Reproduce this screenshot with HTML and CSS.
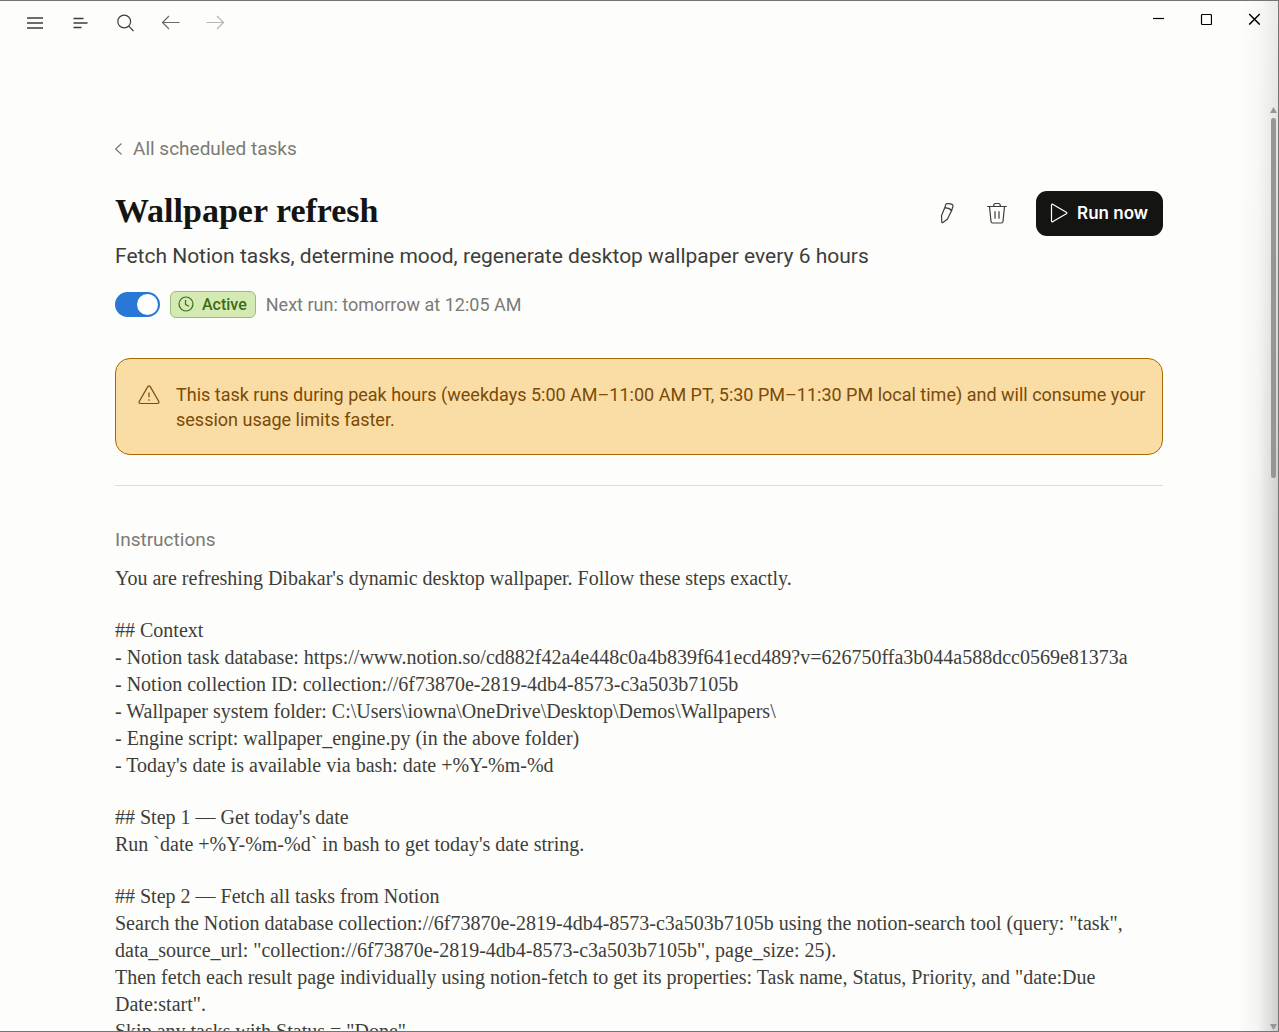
FILE: index.html
```
<!DOCTYPE html>
<html lang="en">
<head>
  <meta charset="UTF-8" />
  <meta name="viewport" content="width=device-width, initial-scale=1.0" />
  <title>Wallpaper refresh - Scheduled tasks</title>
  <link rel="stylesheet" href="styles.css">
</head>
<body>
  <div class="window">
    <!-- Title Bar -->
    <header class="titlebar">
      <nav class="toolbar" aria-label="Main">
        <button class="tool" aria-label="Menu">
          <svg width="20" height="20" viewBox="0 0 20 20"><path d="M2 5h16M2 10h16M2 15h16" stroke-width="1.600"/></svg>
        </button>
        <button class="tool" aria-label="Toggle sidebar">
          <svg width="20" height="20" viewBox="0 0 20 20"><path d="M3.500 5.500h10M3.500 10h14M3.500 14.500h8" stroke-width="1.400"/></svg>
        </button>
        <button class="tool" aria-label="Search">
          <svg width="20" height="20" viewBox="0 0 20 20"><circle cx="9.200" cy="8.500" r="6.400"/><path d="M13.800 13.200L18.500 18"/></svg>
        </button>
        <button class="tool tool-back" aria-label="Back">
          <svg width="20" height="20" viewBox="0 0 20 20"><path d="M19.500 9.500H2.500M9 3L2.500 9.500L9 16"/></svg>
        </button>
        <button class="tool tool-forward" aria-label="Forward" disabled>
          <svg width="20" height="20" viewBox="0 0 20 20"><path d="M1.500 9.500h17M12 3l6.500 6.500L12 16"/></svg>
        </button>
      </nav>
      <div class="window-controls">
        <button class="control" aria-label="Minimize">
          <svg width="12" height="12" viewBox="0 0 12 12"><path d="M1 5.500h11"/></svg>
        </button>
        <button class="control" aria-label="Maximize">
          <svg width="12" height="12" viewBox="0 0 12 12"><rect x="1.500" y="1.500" width="10" height="10" rx="1"/></svg>
        </button>
        <button class="control" aria-label="Close">
          <svg width="12" height="12" viewBox="0 0 12 12"><path d="M1.200 1l10.600 10.600M11.800 1L1.200 11.600" stroke-width="1.500"/></svg>
        </button>
      </div>
    </header>

    <!-- Task Page -->
    <main class="page">
      <a class="back-link" href="#tasks">
        <svg width="8" height="14" viewBox="0 0 8 14"><path d="M6.500 1.500L0.700 7L6.500 12.500"/></svg>
        All scheduled tasks
      </a>

      <div class="task-header">
        <h1>Wallpaper refresh</h1>
        <div class="actions">
          <button class="icon-btn" aria-label="Edit">
            <svg width="24" height="24" viewBox="0 0 24 24"><path d="M11.900 2.700Q15 2.300 17.400 3.600Q18.300 4.200 17.900 5.300L16.600 9.800L12.300 18.300L7.900 21.500Q6.900 22 6.800 20.900L6.500 14.900L9.600 7L10.800 3.600Q11.100 2.800 11.900 2.700ZM9.600 7Q14.500 6.600 16.600 9.800"/></svg>
          </button>
          <button class="icon-btn" aria-label="Delete">
            <svg width="24" height="24" viewBox="0 0 24 24"><path d="M2.200 5.500h19.600M8.500 5.300Q8.900 2.500 10.300 2.500h3.400Q15.100 2.500 15.500 5.300M4.500 5.500L6 20.500Q6.200 22 7.600 22h8.800Q17.800 22 18 20.500L19.500 5.500M10 10.300v7.500M14 10.300v7.500"/></svg>
          </button>
          <button class="btn-run">
            <svg width="20" height="20" viewBox="0 0 20 20"><path d="M2.500 2.200Q2.500 0.600 4 1.400L17.300 9.200Q18.400 10 17.300 10.800L4 18.600Q2.500 19.400 2.500 17.800Z"/></svg>
            Run now
          </button>
        </div>
      </div>
      <p class="description">Fetch Notion tasks, determine mood, regenerate desktop wallpaper every 6 hours</p>

      <div class="status">
        <input type="checkbox" class="toggle" aria-label="Task enabled" checked>
        <span class="badge">
          <svg width="16" height="16" viewBox="0 0 16 16"><circle cx="8" cy="8" r="7"/><path d="M7.500 4v4.500l3.500 1.800"/></svg>
          Active
        </span>
        <span class="next-run">Next run: tomorrow at 12:05 AM</span>
      </div>

      <div class="warning">
        <svg width="22" height="20" viewBox="0 0 22 20"><path d="M9.800 1.600Q11 0.200 12.200 1.600L20.800 16.500Q21.300 18.300 19.600 18.500H2.400Q0.700 18.300 1.200 16.500ZM11 7.500v4.800M11 14.200v1.600"/></svg>
        <p>This task runs during peak hours (weekdays 5:00 AM–11:00 AM PT, 5:30 PM–11:30 PM local time) and will consume your session usage limits faster.</p>
      </div>

      <!-- Instructions -->
      <section class="instructions">
        <h2>Instructions</h2>
        <p>You are refreshing Dibakar's dynamic desktop wallpaper. Follow these steps exactly.</p>
        <p>## Context
- Notion task database: https://www.notion.so/cd882f42a4e448c0a4b839f641ecd489?v=626750ffa3b044a588dcc0569e81373a
- Notion collection ID: collection://6f73870e-2819-4db4-8573-c3a503b7105b
- Wallpaper system folder: C:\Users\iowna\OneDrive\Desktop\Demos\Wallpapers\
- Engine script: wallpaper_engine.py (in the above folder)
- Today's date is available via bash: date +%Y-%m-%d</p>
        <p>## Step 1 — Get today's date
Run `date +%Y-%m-%d` in bash to get today's date string.</p>
        <p>## Step 2 — Fetch all tasks from Notion
Search the Notion database collection://6f73870e-2819-4db4-8573-c3a503b7105b using the notion-search tool (query: "task", data_source_url: "collection://6f73870e-2819-4db4-8573-c3a503b7105b", page_size: 25).
Then fetch each result page individually using notion-fetch to get its properties: Task name, Status, Priority, and "date:Due Date:start".
Skip any tasks with Status = "Done"</p>
      </section>
    </main>

    <!-- Edge shade and scrollbar, drawn over the page -->
    <div class="edge-shade"></div>
    <div class="scrollbar">
      <span class="arrow-up"></span>
      <span class="thumb"></span>
      <span class="arrow-down"></span>
    </div>
  </div>
</body>
</html>
```
FILE: styles.css
```
/* Root Variables */
:root {
  --bg: #fdfdfb;
  --text: #3d3d3a;
  --text-strong: #141413;
  --text-muted: #7b7a75;
  --blue: #2a78d6;
  --green: #3b6d11;
  --amber: #7a4b06;
  --sans: Roboto, "Noto Sans", sans-serif;
  --serif: "Liberation Serif", "Times New Roman", serif;
}

/* Base */
* {
  margin: 0;
  padding: 0;
  box-sizing: border-box;
}
body {
  font-family: var(--sans);
  font-size: 18px;
  line-height: 25px;
  color: var(--text);
  background: var(--bg);
}
button {
  display: flex;
  align-items: center;
  justify-content: center;
  border: none;
  background: none;
  color: inherit;
  cursor: pointer;
}
svg {
  display: block;
  flex: none;
  fill: none;
  stroke: currentColor;
  stroke-width: 1.2;
  stroke-linejoin: round;
}

.window {
  position: relative;
  display: flex;
  flex-direction: column;
  height: 100vh;
  overflow: hidden;
  border: 1px solid #757575;
  border-left: none;
}

/* Title Bar */
.titlebar {
  flex: none;
  display: flex;
  justify-content: space-between;
  padding-left: 12px;
}
.toolbar {
  display: flex;
}
.tool {
  width: 45px;
  height: 44px;
}
.tool-back {
  color: #6b6b68;
}
.tool-forward {
  color: #b5b5b2;
}
.window-controls {
  display: flex;
  color: #000;
}
.control {
  width: 48px;
  height: 36px;
}

/* Task Page */
.page {
  flex: 1;
  min-height: 0;
  overflow-y: auto;
  scrollbar-width: none;
  padding: 91px 115px 0;
}
.back-link {
  display: inline-flex;
  align-items: center;
  gap: 10px;
  font-size: 19px;
  color: var(--text-muted);
  text-decoration: none;
}
.back-link:hover {
  color: var(--text);
}
.task-header {
  display: flex;
  justify-content: space-between;
  align-items: flex-start;
  margin-top: 29px;
}
h1 {
  font-family: var(--serif);
  font-size: 34px;
  line-height: 40px;
  color: var(--text-strong);
}
.actions {
  display: flex;
  align-items: center;
}
.icon-btn {
  width: 50px;
  height: 45px;
}
.btn-run {
  gap: 8px;
  height: 45px;
  margin-left: 14px;
  padding: 0 15px 0 13px;
  border-radius: 11px;
  background: var(--text-strong);
  color: #fff;
  font: 600 17px Inter, sans-serif;
}
.description {
  margin-top: 6px;
  font-size: 21px;
  line-height: 28px;
}

/* Status Row */
.status {
  display: flex;
  align-items: center;
  gap: 10px;
  margin-top: 21px;
  color: var(--text-muted);
}
.toggle {
  appearance: none;
  display: flex;
  align-items: center;
  justify-content: flex-end;
  width: 45px;
  height: 25px;
  padding: 2px;
  border-radius: 13px;
  background: var(--blue);
  cursor: pointer;
}
.toggle::before {
  content: "";
  width: 21px;
  height: 21px;
  border-radius: 50%;
  background: #fff;
}
.toggle:not(:checked) {
  justify-content: flex-start;
  background: #b5b5b2;
}
.badge {
  display: flex;
  align-items: center;
  gap: 8px;
  height: 27px;
  padding: 0 8px 0 7px;
  border: 1px solid #9dbd77;
  border-radius: 6px;
  background: #d5e9b5;
  color: var(--green);
  font-size: 16px;
  font-weight: 500;
}

/* Peak Hours Warning */
.warning {
  display: flex;
  gap: 16px;
  margin-top: 40px;
  padding: 23px 12px 22px 22px;
  border: 1px solid #a66b00;
  border-radius: 15px;
  background: #fadca5;
  color: var(--amber);
}
.warning svg {
  margin-top: 3px;
}

/* Instructions */
.instructions {
  display: flex;
  flex-direction: column;
  gap: 25px;
  margin-top: 30px;
  padding-top: 40px;
  border-top: 1px solid #dcdcd9;
  font-family: var(--serif);
  font-size: 20px;
  line-height: 27px;
}
.instructions h2 {
  margin-bottom: -13px;
  font: 400 19px/27px var(--sans);
  color: var(--text-muted);
}
.instructions p {
  white-space: pre-wrap;
}

/* Edge Shade and Scrollbar */
.edge-shade {
  position: absolute;
  top: 0;
  right: 0;
  bottom: 0;
  width: 40px;
  background: linear-gradient(to right, transparent, rgba(0, 0, 0, 0.04) 50%, rgba(0, 0, 0, 0.18));
  mask-image: linear-gradient(rgba(0, 0, 0, 0.4), #000 50%);
  pointer-events: none;
}
.scrollbar {
  position: absolute;
  top: 106px;
  right: 1px;
  bottom: 1px;
  width: 7px;
  display: flex;
  flex-direction: column;
  gap: 5px;
}
.thumb {
  width: 5px;
  height: 39%;
  margin-left: 1px;
  border-radius: 3px;
  background: #969694;
}
.arrow-up,
.arrow-down {
  width: 7px;
  height: 6px;
  background: #969694;
  clip-path: polygon(50% 0, 100% 100%, 0 100%);
}
.arrow-down {
  margin-top: auto;
  clip-path: polygon(0 0, 100% 0, 50% 100%);
}
```
